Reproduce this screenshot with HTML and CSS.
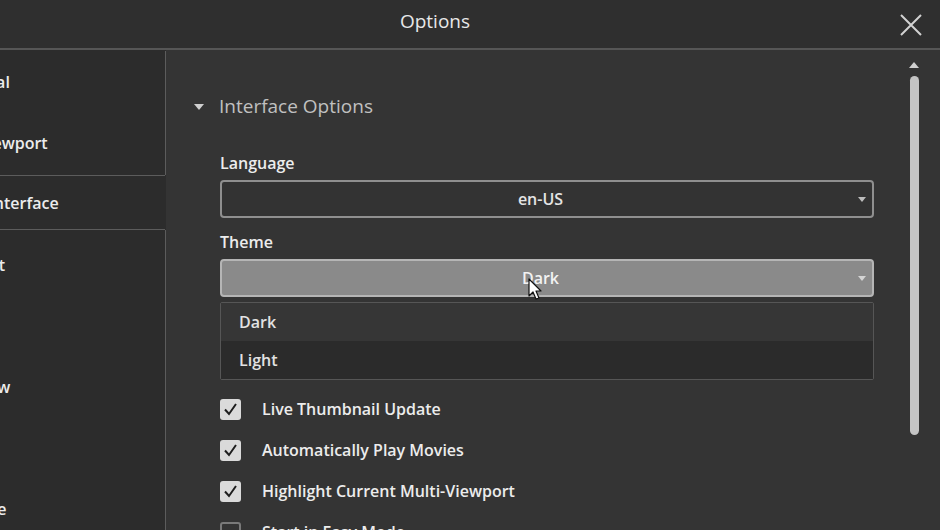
FILE: index.html
```html
<!DOCTYPE html>
<html lang="en">
<head>
<meta charset="utf-8">
<title>Options</title>
<link rel="stylesheet" href="styles.css">
</head>
<body>
<div class="dialog">
  <header class="titlebar">
    <span class="spacer"></span>
    <span class="title">Options</span>
    <span class="close-wrap">
      <svg class="close" width="22" height="22" viewBox="0 0 22 22"><path d="M1 1 L21 21 M21 1 L1 21" stroke="#d2d2d2" stroke-width="2" fill="none"/></svg>
    </span>
  </header>
  <div class="body">
    <nav class="sidebar">
      <div class="nav-item first">General</div>
      <div class="nav-item second">3D Viewport</div>
      <div class="nav-item selected">User Interface</div>
      <div class="nav-item fourth">Import</div>
      <div class="nav-item">Music</div>
      <div class="nav-item">Preview</div>
      <div class="nav-item">Help</div>
      <div class="nav-item">License</div>
    </nav>
    <main class="content">
      <div class="scroll-area">
        <div class="section-head"><span class="caret"></span><span>Interface Options</span></div>
        <div class="form">
          <div class="field-label">Language</div>
          <div class="select"><span class="select-text">en-US</span><span class="arrow"></span></div>
          <div class="field-label theme-label">Theme</div>
          <div class="select hovered"><span class="select-text">Dark</span><span class="arrow"></span></div>
          <div class="dropdown">
            <div class="option">Dark</div>
            <div class="option alt">Light</div>
          </div>
          <div class="checks">
            <div class="check-row"><span class="box checked"><svg width="21" height="21" viewBox="0 0 21 21"><path d="M5 10.5 L9 15 L16 5" stroke="#1e1e1e" stroke-width="2" fill="none"/></svg></span><span class="check-label">Live Thumbnail Update</span></div>
            <div class="check-row"><span class="box checked"><svg width="21" height="21" viewBox="0 0 21 21"><path d="M5 10.5 L9 15 L16 5" stroke="#1e1e1e" stroke-width="2" fill="none"/></svg></span><span class="check-label">Automatically Play Movies</span></div>
            <div class="check-row"><span class="box checked"><svg width="21" height="21" viewBox="0 0 21 21"><path d="M5 10.5 L9 15 L16 5" stroke="#1e1e1e" stroke-width="2" fill="none"/></svg></span><span class="check-label">Highlight Current Multi-Viewport</span></div>
            <div class="check-row"><span class="box"></span><span class="check-label">Start in Easy Mode</span></div>
          </div>
        </div>
      </div>
      <div class="scrollbar">
        <span class="up"></span>
        <span class="thumb"></span>
      </div>
    </main>
  </div>
</div>
<svg class="cursor" width="16" height="24" viewBox="0 0 16 24"><path d="M1 1 L1 18 L5 14 L8 21 L11 20 L8 13 L13 13 Z" fill="#ffffff" stroke="#111" stroke-width="1.2" stroke-linejoin="round"/></svg>
</body>
</html>
```
FILE: styles.css
```css
html, body {
  margin: 0;
  padding: 0;
  width: 940px;
  height: 530px;
  overflow: hidden;
  background: #333333;
  font-family: "Open Sans", "Noto Sans", sans-serif;
  color: #e6e6e6;
}

.dialog {
  width: 1010px;
  height: 530px;
  margin-left: -70px;
  display: flex;
  flex-direction: column;
}

.titlebar {
  height: 48px;
  flex: none;
  background: #2f2f2f;
  border-bottom: 2px solid #565656;
  display: grid;
  grid-template-columns: 1fr auto 1fr;
  align-items: center;
}

.title {
  font-size: 19px;
  color: #e8e8e8;
  padding-bottom: 6px;
}

.close-wrap {
  justify-self: end;
  padding-right: 18px;
  display: flex;
  padding-top: 2px;
}

.body {
  flex: 1;
  display: flex;
  min-height: 0;
}

.sidebar {
  width: 236px;
  flex: none;
  background: #2c2c2c;
  display: flex;
  flex-direction: column;
  padding-top: 1px;
}

.nav-item {
  height: 61px;
  flex: none;
  box-sizing: border-box;
  display: flex;
  align-items: center;
  padding-left: 19px;
  border-right: 1px solid #5c5c5c;
  font-size: 16px;
  font-weight: 600;
  color: #ececec;
  white-space: nowrap;
}

.nav-item.first { height: 61px; }
.nav-item.second { height: 63px; padding-bottom: 2px; padding-left: 23px; }
.nav-item.selected {
  height: 55px;
  border-right: none;
  border-top: 1px solid #5c5c5c;
  border-bottom: 1px solid #5c5c5c;
  margin-right: 1px;
}
.nav-item.fourth { height: 65px; padding-top: 4px; padding-left: 22px; }

.content {
  flex: 1;
  display: flex;
  background: #343434;
  min-width: 0;
}

.scroll-area {
  width: 738px;
  flex: none;
  padding-left: 28px;
  padding-top: 43px;
  box-sizing: border-box;
}

.section-head {
  display: flex;
  align-items: center;
  height: 26px;
  font-size: 19px;
  color: #c0c0c0;
}

.caret {
  width: 0;
  height: 0;
  border-left: 5.5px solid transparent;
  border-right: 5.5px solid transparent;
  border-top: 6px solid #cfcfcf;
  margin-right: 15px;
  margin-top: 1px;
}

.form {
  margin-left: 26px;
  width: 654px;
  display: flex;
  flex-direction: column;
  padding-top: 33px;
}

.field-label {
  font-size: 16px;
  font-weight: 600;
  line-height: 22px;
  color: #ececec;
  margin-bottom: 6px;
}

.theme-label {
  margin-top: 13px;
}

.select {
  height: 38px;
  box-sizing: border-box;
  border: 2px solid #8f8f8f;
  border-radius: 4px;
  background: #333333;
  display: flex;
  align-items: center;
  justify-content: center;
  font-size: 16px;
  font-weight: 600;
  color: #e4e4e4;
}

.select-text {
  flex: 1;
  text-align: center;
  padding-left: 12px;
  padding-bottom: 1px;
}

.arrow {
  width: 0;
  height: 0;
  border-left: 4.5px solid transparent;
  border-right: 4.5px solid transparent;
  border-top: 5px solid #bdbdbd;
  margin-right: 6px;
  margin-left: 11px;
}

.select.hovered {
  background: #8a8a8a;
  border-color: #b5b5b5;
  color: #f2f2f2;
}

.select.hovered .arrow {
  border-top-color: #d4d4d4;
}

.dropdown {
  margin-top: 5px;
  border: 1px solid #565656;
  border-radius: 2px;
  display: flex;
  flex-direction: column;
}

.option {
  height: 38px;
  display: flex;
  align-items: center;
  padding-left: 18px;
  font-size: 16px;
  font-weight: 600;
  color: #e2e2e2;
  background: #363636;
}

.option.alt {
  background: #2b2b2b;
}

.checks {
  display: flex;
  flex-direction: column;
  gap: 19px;
  margin-top: 18px;
}

.check-row {
  display: flex;
  align-items: center;
  height: 22px;
}

.box {
  width: 21px;
  height: 21px;
  box-sizing: border-box;
  border-radius: 3px;
  border: 2px solid #7a7a7a;
  flex: none;
  display: flex;
}

.box.checked {
  background: #dadada;
  border: none;
}

.check-label {
  margin-left: 21px;
  font-size: 16px;
  font-weight: 600;
  color: #ececec;
  padding-bottom: 1px;
}

.scrollbar {
  width: 20px;
  flex: none;
  display: flex;
  flex-direction: column;
  align-items: center;
  padding-top: 12px;
}

.up {
  width: 0;
  height: 0;
  border-left: 5px solid transparent;
  border-right: 5px solid transparent;
  border-bottom: 6px solid #cfcfcf;
}

.thumb {
  margin-top: 8px;
  width: 9px;
  height: 359px;
  border-radius: 5px;
  background: #c4c4c4;
}

.cursor {
  position: absolute;
  left: 528px;
  top: 278px;
}
```
